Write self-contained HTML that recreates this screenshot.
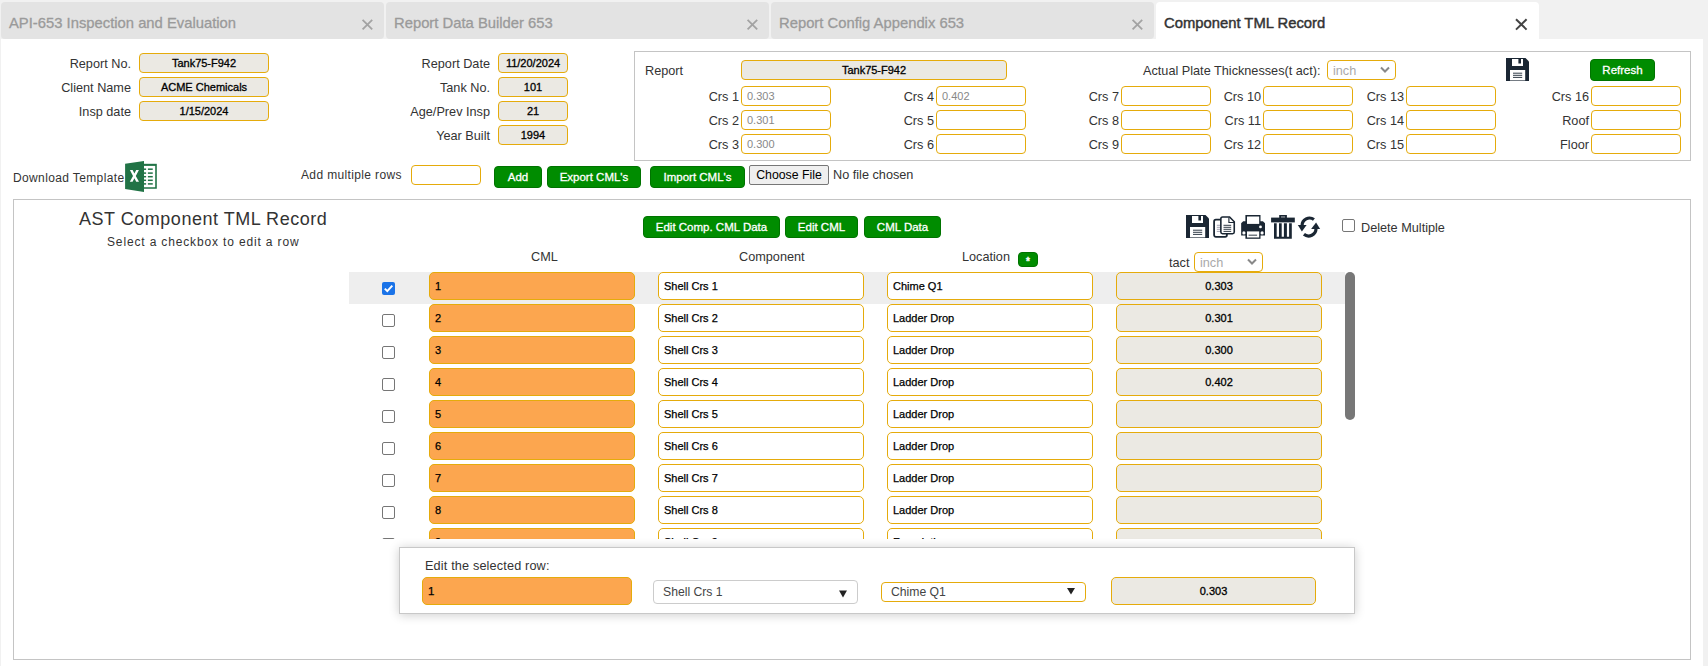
<!DOCTYPE html>
<html><head><meta charset="utf-8">
<style>
*{box-sizing:border-box;margin:0;padding:0}
html,body{width:1708px;height:666px;overflow:hidden;background:#fff;font-family:"Liberation Sans",sans-serif;color:#333}
.a{position:absolute}
.tabbar{left:0;top:0;width:1708px;height:39px;background:#f1f1f1}
.tab{top:2px;height:37px;width:383px;background:#e3e3e3;border-radius:4px;font-size:14.8px;color:#9a9a9a;padding-left:8px;-webkit-text-stroke:0.3px #9a9a9a;line-height:42px;white-space:nowrap}
.tab svg{position:absolute;left:360px;top:15px}
.tab.act{background:#fff;color:#333;border-radius:4px 4px 0 0;height:37px;-webkit-text-stroke:0.45px #333}
.lstrip{left:0;top:39px;width:1px;height:627px;background:#f1f1f1}
.rstrip{left:1703px;top:39px;width:5px;height:627px;background:#f1f1f1}
.lbl{font-size:12.7px;color:#333;white-space:nowrap;text-align:right}
.fld{height:20px;border:1px solid #e5ab0b;border-radius:4px;background:#ebe9e3;font-size:11px;color:#000;-webkit-text-stroke:0.3px #000;text-align:center;line-height:18px;white-space:nowrap}
.inp{height:20px;border:1px solid #e5ab0b;border-radius:4px;background:#fff;font-size:11px;color:#888;padding-left:5px;line-height:18px;white-space:nowrap}
.gbtn{height:22px;background:#008c00;border:1px solid #007300;border-radius:4px;color:#fff;font-size:11.5px;-webkit-text-stroke:0.3px #fff;text-align:center;line-height:20px;white-space:nowrap}
.sel .chev{position:absolute;right:5px;top:5px}
.sel{line-height:20px}
.panel{border:1px solid #c4c4c4}
.row{left:349px;width:996px;height:32px}
.cml{left:429px;width:206px;height:28px;background:#fca64f;border:1px solid #e5ab0b;border-radius:5px;font-size:11px;color:#000;-webkit-text-stroke:0.25px #000;padding-left:5px;line-height:26px}
.cmp{width:206px;height:28px;background:#fff;border:1px solid #e5ab0b;border-radius:5px;font-size:11px;color:#000;-webkit-text-stroke:0.25px #000;padding-left:5px;line-height:26px;white-space:nowrap}
.tac{left:1116px;width:206px;height:28px;background:#ebe9e3;border:1px solid #e5ab0b;border-radius:5px;font-size:11px;color:#000;-webkit-text-stroke:0.3px #000;text-align:center;line-height:26px}
.cb{left:382px;width:13px;height:13px;border:1px solid #767676;border-radius:2px;background:#fff}
</style></head><body>
<div class="a tabbar"></div>
<div class="a tab" style="left:1px">API-653 Inspection and Evaluation<svg width="14" height="14" viewBox="0 0 14 14"><path d="M1.6 2.8L11.2 12.3M11.2 2.8L1.6 12.3" stroke="#a3a3a3" stroke-width="1.8"/></svg></div>
<div class="a tab" style="left:386px">Report Data Builder 653<svg width="14" height="14" viewBox="0 0 14 14"><path d="M1.6 2.8L11.2 12.3M11.2 2.8L1.6 12.3" stroke="#a3a3a3" stroke-width="1.8"/></svg></div>
<div class="a tab" style="left:771px">Report Config Appendix 653<svg width="14" height="14" viewBox="0 0 14 14"><path d="M1.6 2.8L11.2 12.3M11.2 2.8L1.6 12.3" stroke="#a3a3a3" stroke-width="1.8"/></svg></div>
<div class="a tab act" style="left:1156px">Component TML Record<svg width="14" height="14" viewBox="0 0 14 14" style="left:358px"><path d="M2 2.2L12.6 12.6M12.6 2.2L2 12.6" stroke="#444" stroke-width="2"/></svg></div>
<div class="a lstrip"></div>
<div class="a rstrip"></div>

<!-- left fields -->
<div class="a lbl" style="left:30px;top:57px;width:101px">Report No.</div>
<div class="a lbl" style="left:30px;top:81px;width:101px">Client Name</div>
<div class="a lbl" style="left:30px;top:105px;width:101px">Insp date</div>
<div class="a fld" style="left:139px;top:53px;width:130px">Tank75-F942</div>
<div class="a fld" style="left:139px;top:77px;width:130px">ACME Chemicals</div>
<div class="a fld" style="left:139px;top:101px;width:130px">1/15/2024</div>

<div class="a lbl" style="left:380px;top:57px;width:110px">Report Date</div>
<div class="a lbl" style="left:380px;top:81px;width:110px">Tank No.</div>
<div class="a lbl" style="left:380px;top:105px;width:110px">Age/Prev Insp</div>
<div class="a lbl" style="left:380px;top:129px;width:110px">Year Built</div>
<div class="a fld" style="left:498px;top:53px;width:70px">11/20/2024</div>
<div class="a fld" style="left:498px;top:77px;width:70px">101</div>
<div class="a fld" style="left:498px;top:101px;width:70px">21</div>
<div class="a fld" style="left:498px;top:125px;width:70px">1994</div>

<!-- report panel -->
<div class="a panel" style="left:634px;top:51px;width:1057px;height:110px"></div>
<div class="a lbl" style="left:645px;top:64px;text-align:left">Report</div>
<div class="a fld" style="left:741px;top:60px;width:266px">Tank75-F942</div>
<div class="a lbl" style="left:641px;top:90px;width:98px">Crs 1</div>
<div class="a inp" style="left:741px;top:86px;width:90px">0.303</div>
<div class="a lbl" style="left:641px;top:114px;width:98px">Crs 2</div>
<div class="a inp" style="left:741px;top:110px;width:90px">0.301</div>
<div class="a lbl" style="left:641px;top:138px;width:98px">Crs 3</div>
<div class="a inp" style="left:741px;top:134px;width:90px">0.300</div>
<div class="a lbl" style="left:836px;top:90px;width:98px">Crs 4</div>
<div class="a inp" style="left:936px;top:86px;width:90px">0.402</div>
<div class="a lbl" style="left:836px;top:114px;width:98px">Crs 5</div>
<div class="a inp" style="left:936px;top:110px;width:90px"></div>
<div class="a lbl" style="left:836px;top:138px;width:98px">Crs 6</div>
<div class="a inp" style="left:936px;top:134px;width:90px"></div>
<div class="a lbl" style="left:1021px;top:90px;width:98px">Crs 7</div>
<div class="a inp" style="left:1121px;top:86px;width:90px"></div>
<div class="a lbl" style="left:1021px;top:114px;width:98px">Crs 8</div>
<div class="a inp" style="left:1121px;top:110px;width:90px"></div>
<div class="a lbl" style="left:1021px;top:138px;width:98px">Crs 9</div>
<div class="a inp" style="left:1121px;top:134px;width:90px"></div>
<div class="a lbl" style="left:1163px;top:90px;width:98px">Crs 10</div>
<div class="a inp" style="left:1263px;top:86px;width:90px"></div>
<div class="a lbl" style="left:1163px;top:114px;width:98px">Crs 11</div>
<div class="a inp" style="left:1263px;top:110px;width:90px"></div>
<div class="a lbl" style="left:1163px;top:138px;width:98px">Crs 12</div>
<div class="a inp" style="left:1263px;top:134px;width:90px"></div>
<div class="a lbl" style="left:1306px;top:90px;width:98px">Crs 13</div>
<div class="a inp" style="left:1406px;top:86px;width:90px"></div>
<div class="a lbl" style="left:1306px;top:114px;width:98px">Crs 14</div>
<div class="a inp" style="left:1406px;top:110px;width:90px"></div>
<div class="a lbl" style="left:1306px;top:138px;width:98px">Crs 15</div>
<div class="a inp" style="left:1406px;top:134px;width:90px"></div>
<div class="a lbl" style="left:1491px;top:90px;width:98px">Crs 16</div>
<div class="a inp" style="left:1591px;top:86px;width:90px"></div>
<div class="a lbl" style="left:1491px;top:114px;width:98px">Roof</div>
<div class="a inp" style="left:1591px;top:110px;width:90px"></div>
<div class="a lbl" style="left:1491px;top:138px;width:98px">Floor</div>
<div class="a inp" style="left:1591px;top:134px;width:90px"></div>
<div class="a lbl" style="left:1143px;top:64px;text-align:left">Actual Plate Thicknesses(t act):</div>
<div class="a inp sel" style="left:1327px;top:60px;width:69px;font-size:12.7px;color:#aaa">inch<svg class="chev" width="10" height="8" viewBox="0 0 10 8"><path d="M1 1.5L5 5.5L9 1.5" fill="none" stroke="#888" stroke-width="2"/></svg></div>
<svg class="a" style="left:1506px;top:58px" width="23" height="23" viewBox="0 0 23 23"><path d="M0 0H19.5L23 3.5V23H0Z" fill="#1a2633"/><rect x="6" y="1" width="11" height="7" fill="#fff"/><rect x="12.4" y="1" width="2.6" height="4.5" fill="#1a2633"/><rect x="4" y="12" width="15.2" height="10.4" fill="#fff"/><path d="M7 15.2H16.2M7 17.3H16.2M7 19.4H16.2" stroke="#1a2633" stroke-width="0.9"/></svg>
<div class="a gbtn" style="left:1590px;top:59px;width:65px">Refresh</div>
<div class="a lbl" style="left:13px;top:171px;text-align:left;font-size:12px;letter-spacing:0.37px">Download Template</div>
<svg class="a" style="left:125px;top:161px" width="32" height="31" viewBox="0 0 32 31">
<rect x="19" y="2.8" width="12.8" height="24.95" fill="#217346"/>
<rect x="19" y="4.9" width="11.2" height="21.35" fill="#fff"/>
<rect x="19" y="7.45" width="2.1" height="1.5" fill="#217346"/><rect x="22.9" y="7.45" width="4.85" height="1.5" fill="#217346"/><rect x="19" y="11.35" width="2.1" height="1.5" fill="#217346"/><rect x="22.9" y="11.35" width="4.85" height="1.5" fill="#217346"/><rect x="19" y="14.95" width="2.1" height="1.5" fill="#217346"/><rect x="22.9" y="14.95" width="4.85" height="1.5" fill="#217346"/><rect x="19" y="18.55" width="2.1" height="1.5" fill="#217346"/><rect x="22.9" y="18.55" width="4.85" height="1.5" fill="#217346"/><rect x="19" y="22.15" width="2.1" height="1.5" fill="#217346"/><rect x="22.9" y="22.15" width="4.85" height="1.5" fill="#217346"/>
<path d="M0.1 2.8L19 0.1V31L0.1 28Z" fill="#217346"/>
<path d="M4.9 9.1H7.6L9.4 12.6L11.2 9.1H13.9L10.8 14.9L14 20.8H11.2L9.4 17.2L7.6 20.8H4.8L8 14.9Z" fill="#fff"/>
</svg>
<div class="a lbl" style="left:301px;top:168px;text-align:left;font-size:12px;letter-spacing:0.36px">Add multiple rows</div>
<div class="a inp" style="left:411px;top:165px;width:70px"></div>
<div class="a gbtn" style="left:494px;top:166px;width:48px">Add</div>
<div class="a gbtn" style="left:547px;top:166px;width:94px">Export CML's</div>
<div class="a gbtn" style="left:650px;top:166px;width:95px">Import CML's</div>
<div class="a" style="left:749px;top:165px;width:80px;height:20px;background:#efefef;border:1px solid #767676;border-radius:2px;font-size:12.3px;color:#000;text-align:center;line-height:18px">Choose File</div>
<div class="a lbl" style="left:833px;top:168px;text-align:left;font-size:12.7px;color:#333">No file chosen</div>
<div class="a panel" style="left:13px;top:199px;width:1678px;height:461px"></div>
<div class="a" style="left:79px;top:209px;font-size:18px;letter-spacing:0.52px;color:#333;white-space:nowrap">AST Component TML Record</div>
<div class="a" style="left:107px;top:235px;font-size:12px;letter-spacing:0.85px;color:#333;white-space:nowrap">Select a checkbox to edit a row</div>
<div class="a gbtn" style="left:643px;top:216px;width:137px">Edit Comp. CML Data</div>
<div class="a gbtn" style="left:785px;top:216px;width:73px">Edit CML</div>
<div class="a gbtn" style="left:864px;top:216px;width:77px">CML Data</div>
<div class="a lbl" style="left:531px;top:250px;text-align:left">CML</div>
<div class="a lbl" style="left:739px;top:250px;text-align:left">Component</div>
<div class="a lbl" style="left:962px;top:250px;text-align:left">Location</div>
<div class="a gbtn" style="left:1018px;top:252px;width:20px;height:15px;line-height:18px;font-size:10px;font-weight:bold">*</div>
<div class="a lbl" style="left:1169px;top:256px;text-align:left">tact</div>
<svg class="a" style="left:1186px;top:215px" width="23" height="23" viewBox="0 0 23 23"><path d="M0 0H19.5L23 3.5V23H0Z" fill="#1a2633"/><rect x="6" y="1" width="11" height="7" fill="#fff"/><rect x="12.4" y="1" width="2.6" height="4.5" fill="#1a2633"/><rect x="4" y="12" width="15.2" height="10.4" fill="#fff"/><path d="M7 15.2H16.2M7 17.3H16.2M7 19.4H16.2" stroke="#1a2633" stroke-width="0.9"/></svg>
<svg class="a" style="left:1213px;top:216px" width="23" height="23" viewBox="0 0 23 23">
<rect x="1.1" y="3.7" width="12.8" height="17.1" rx="1.8" fill="#fff" stroke="#1a2633" stroke-width="1.8"/>
<path d="M3.8 9.3H7.6M3.8 11.3H7.6M3.8 13.3H7.6M3.8 15.4H7.6" stroke="#99a" stroke-width="0.9"/>
<path d="M9.6 1.05H16.6L21.25 5.8V16.1Q21.25 17.75 19.6 17.75H9.5Q7.85 17.75 7.85 16.1V2.8Q7.85 1.05 9.6 1.05Z" fill="#fff" stroke="#1a2633" stroke-width="1.6"/>
<path d="M15.9 1.5V6.5H21" fill="none" stroke="#1a2633" stroke-width="1.1"/>
<path d="M10.5 9.3H18.2M10.5 11.3H18.2M10.5 13.3H18.2M10.5 15.4H18.2" stroke="#1a2633" stroke-width="0.9"/>
</svg>
<svg class="a" style="left:1241px;top:215px" width="24" height="24" viewBox="0 0 24 24">
<path d="M2.2 6.2H21.9L24 8.3V20.6H0.15V8.3Z" fill="#1a2633"/>
<rect x="4.4" y="-0.1" width="15.1" height="9" fill="#1a2633"/><rect x="6" y="1.5" width="12.2" height="7.4" fill="#fff"/>
<rect x="4.4" y="15.7" width="15.1" height="8.1" fill="#1a2633"/><rect x="6" y="16.4" width="12.2" height="6.1" fill="#fff"/>
<rect x="7.6" y="19.7" width="8.5" height="0.9" fill="#1a2633"/>
<circle cx="2.9" cy="17.9" r="1.6" fill="#fff"/><circle cx="21.1" cy="17.9" r="1.6" fill="#fff"/>
<circle cx="19.5" cy="11.9" r="1.4" fill="#fff"/>
</svg>
<svg class="a" style="left:1271px;top:215px" width="24" height="24" viewBox="0 0 24 24">
<rect x="8.2" y="-0.1" width="7.7" height="4" fill="#1a2633"/><rect x="10" y="1.3" width="4.1" height="1.8" fill="#8a9096"/>
<rect x="0.1" y="2.6" width="23.7" height="4.8" fill="#1a2633"/>
<path d="M3 8.3H5.7V21.8H8V8.3H10.7V21.8H12.9V8.3H15.9V21.8H18.1V8.3H20.8V23.8H3Z" fill="#1a2633"/>
</svg>
<svg class="a" style="left:1294px;top:212px" width="30" height="30" viewBox="0 0 30 30">
<path d="M8.1 13.6A7.4 7.4 0 0 1 19.94 7.58" fill="none" stroke="#1a2633" stroke-width="3.2"/>
<path d="M3.8 13.1L12.6 13.1L7.9 19.5Z" fill="#1a2633"/>
<path d="M22 16.5A7.4 7.4 0 0 1 9.94 22.35" fill="none" stroke="#1a2633" stroke-width="3.2"/>
<path d="M17.1 16.9L26.1 16.9L22.1 10.4Z" fill="#1a2633"/>
</svg>
<div class="a cb" style="left:1342px;top:219px"></div>
<div class="a lbl" style="left:1361px;top:221px;text-align:left">Delete Multiple</div>
<div class="a" style="left:349px;top:272px;width:1010px;height:267px;overflow:hidden">
<div class="a" style="left:0;top:0;width:996px;height:32px;background:#eee"></div>
<svg class="a" style="left:33px;top:10px" width="13" height="13" viewBox="0 0 13 13"><rect x="0" y="0" width="13" height="13" rx="2" fill="#1a73e8"/><path d="M2.8 6.6L5.3 9.1L10.3 3.6" fill="none" stroke="#fff" stroke-width="2"/></svg>
<div class="a cml" style="left:80px;top:0px">1</div>
<div class="a cmp" style="left:309px;top:0px">Shell Crs 1</div>
<div class="a cmp" style="left:538px;top:0px">Chime Q1</div>
<div class="a tac" style="left:767px;top:0px">0.303</div>
<div class="a cb" style="left:33px;top:42px"></div>
<div class="a cml" style="left:80px;top:32px">2</div>
<div class="a cmp" style="left:309px;top:32px">Shell Crs 2</div>
<div class="a cmp" style="left:538px;top:32px">Ladder Drop</div>
<div class="a tac" style="left:767px;top:32px">0.301</div>
<div class="a cb" style="left:33px;top:74px"></div>
<div class="a cml" style="left:80px;top:64px">3</div>
<div class="a cmp" style="left:309px;top:64px">Shell Crs 3</div>
<div class="a cmp" style="left:538px;top:64px">Ladder Drop</div>
<div class="a tac" style="left:767px;top:64px">0.300</div>
<div class="a cb" style="left:33px;top:106px"></div>
<div class="a cml" style="left:80px;top:96px">4</div>
<div class="a cmp" style="left:309px;top:96px">Shell Crs 4</div>
<div class="a cmp" style="left:538px;top:96px">Ladder Drop</div>
<div class="a tac" style="left:767px;top:96px">0.402</div>
<div class="a cb" style="left:33px;top:138px"></div>
<div class="a cml" style="left:80px;top:128px">5</div>
<div class="a cmp" style="left:309px;top:128px">Shell Crs 5</div>
<div class="a cmp" style="left:538px;top:128px">Ladder Drop</div>
<div class="a tac" style="left:767px;top:128px"></div>
<div class="a cb" style="left:33px;top:170px"></div>
<div class="a cml" style="left:80px;top:160px">6</div>
<div class="a cmp" style="left:309px;top:160px">Shell Crs 6</div>
<div class="a cmp" style="left:538px;top:160px">Ladder Drop</div>
<div class="a tac" style="left:767px;top:160px"></div>
<div class="a cb" style="left:33px;top:202px"></div>
<div class="a cml" style="left:80px;top:192px">7</div>
<div class="a cmp" style="left:309px;top:192px">Shell Crs 7</div>
<div class="a cmp" style="left:538px;top:192px">Ladder Drop</div>
<div class="a tac" style="left:767px;top:192px"></div>
<div class="a cb" style="left:33px;top:234px"></div>
<div class="a cml" style="left:80px;top:224px">8</div>
<div class="a cmp" style="left:309px;top:224px">Shell Crs 8</div>
<div class="a cmp" style="left:538px;top:224px">Ladder Drop</div>
<div class="a tac" style="left:767px;top:224px"></div>
<div class="a cb" style="left:33px;top:266px"></div>
<div class="a cml" style="left:80px;top:256px">9</div>
<div class="a cmp" style="left:309px;top:256px">Shell Crs 9</div>
<div class="a cmp" style="left:538px;top:256px">Foundation</div>
<div class="a tac" style="left:767px;top:256px"></div>
<div class="a" style="left:996px;top:0;width:10px;height:148px;background:#777;border-radius:5px"></div>
</div>
<div class="a inp sel" style="left:1194px;top:252px;width:69px;font-size:12.7px;color:#aaa">inch<svg class="chev" width="10" height="8" viewBox="0 0 10 8"><path d="M1 1.5L5 5.5L9 1.5" fill="none" stroke="#888" stroke-width="2"/></svg></div>
<div class="a" style="left:399px;top:547px;width:956px;height:67px;background:#fff;border:1px solid #c8c8c8;box-shadow:0 1px 10px rgba(0,0,0,0.2)"></div>
<div class="a lbl" style="left:425px;top:559px;text-align:left;letter-spacing:0.15px">Edit the selected row:</div>
<div class="a cml" style="left:422px;top:577px;width:210px;font-weight:normal;font-size:11.5px;color:#000">1</div>
<div class="a" style="left:653px;top:580px;width:205px;height:24px;border:1px solid #ccc;border-radius:4px;font-size:12.2px;color:#444;padding-left:9px;line-height:22px">Shell Crs 1<svg class="a" style="left:185px;top:9px" width="8" height="8" viewBox="0 0 8 8"><path d="M0 0.5H8L4 7.5Z" fill="#222"/></svg></div>
<div class="a" style="left:881px;top:582px;width:205px;height:20px;border:1px solid #e5ab0b;border-radius:4px;font-size:12.2px;color:#444;padding-left:9px;line-height:18px">Chime Q1<svg class="a" style="left:185px;top:5px" width="8" height="8" viewBox="0 0 8 8"><path d="M0 0H8L4 6.5Z" fill="#222"/></svg></div>
<div class="a tac" style="left:1111px;top:577px;width:205px">0.303</div>
</body></html>
